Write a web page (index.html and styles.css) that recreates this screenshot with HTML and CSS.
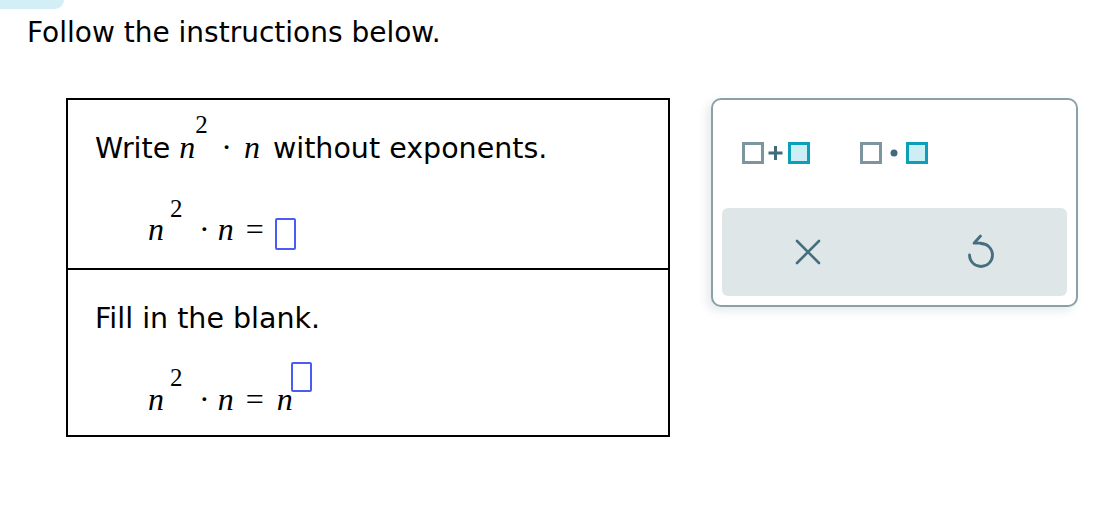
FILE: index.html
```html
<!DOCTYPE html>
<html lang="en">
<head>
<meta charset="utf-8">
<title>Follow the instructions below.</title>
<link rel="stylesheet" href="styles.css">
</head>
<body>
<div class="tab"></div>
<h1 class="title">Follow the instructions below.</h1>
<div class="main">
  <div class="problem">
    <div class="cell cell-a">
      <p class="prompt">Write <span class="math"><span class="mi">n</span><span class="sup s1">2</span><span class="mo dot1">·</span><span class="mi last">n</span></span>without exponents.</p>
      <div class="eq eq-a"><span class="mi first">n</span><span class="sup s2">2</span><span class="mo dot2">·</span><span class="mi n2">n</span><span class="mo equals">=</span><span class="blank blank-a"></span></div>
    </div>
    <div class="cell cell-b">
      <p class="prompt">Fill in the blank.</p>
      <div class="eq eq-b"><span class="mi first">n</span><span class="sup s2">2</span><span class="mo dot2">·</span><span class="mi n2">n</span><span class="mo equals">=</span><span class="mi n3">n</span><span class="blank blank-b"></span></div>
    </div>
  </div>
  <div class="panel">
    <div class="tools">
      <button class="tool" type="button" aria-label="sum">
        <svg width="68" height="22" viewBox="0 0 68 22">
          <rect x="1.5" y="1.5" width="19" height="19" fill="#fff" stroke="#7c959f" stroke-width="3"/>
          <path d="M26.5 11h14M33.5 4v14" stroke="#44697a" stroke-width="3" fill="none"/>
          <rect x="47.5" y="1.5" width="19" height="19" fill="#cdeef4" stroke="#0b9fb8" stroke-width="3"/>
        </svg>
      </button>
      <button class="tool" type="button" aria-label="product">
        <svg width="68" height="22" viewBox="0 0 68 22">
          <rect x="1.5" y="1.5" width="19" height="19" fill="#fff" stroke="#7c959f" stroke-width="3"/>
          <circle cx="34" cy="11" r="3.5" fill="#44697a"/>
          <rect x="47.5" y="1.5" width="19" height="19" fill="#cdeef4" stroke="#0b9fb8" stroke-width="3"/>
        </svg>
      </button>
    </div>
    <div class="actions">
      <button class="action" type="button" aria-label="clear">
        <svg width="26" height="26" viewBox="0 0 26 26">
          <path d="M2 2L24 24M24 2L2 24" stroke="#456f7e" stroke-width="2.6" stroke-linecap="round" fill="none"/>
        </svg>
      </button>
      <button class="action" type="button" aria-label="reset">
        <svg width="28" height="36" viewBox="0 0 28 36">
          <path d="M14 9.5A11.5 11.5 0 1 1 2.5 21" stroke="#456f7e" stroke-width="2.8" stroke-linecap="round" fill="none"/>
          <path d="M13.5 2L7 9.2H14" stroke="#456f7e" stroke-width="2.8" stroke-linecap="round" stroke-linejoin="round" fill="none"/>
        </svg>
      </button>
    </div>
  </div>
</div>
</body>
</html>
```
FILE: styles.css
```css
html, body {
  margin: 0;
  padding: 0;
  background: #fff;
}
body {
  font-family: "DejaVu Sans", Verdana, sans-serif;
  color: #000;
}
.tab {
  width: 64px;
  height: 9px;
  background: #d3eff5;
  border-bottom-right-radius: 9px;
}
.title {
  margin: 8.3px 0 0 0;
  padding-left: 27px;
  font-size: 28px;
  font-weight: normal;
  line-height: 32px;
}
.main {
  display: flex;
  align-items: flex-start;
  margin-top: 48.7px;
  padding-left: 66px;
}
.problem {
  width: 604px;
  box-sizing: border-box;
  border: 2px solid #000;
}
.cell {
  box-sizing: border-box;
  padding-left: 27px;
}
.cell-a {
  height: 170px;
  border-bottom: 2px solid #000;
  padding-top: 24.55px;
}
.cell-b {
  height: 165px;
  padding-top: 31.65px;
}
.prompt {
  margin: 0;
  font-size: 28.5px;
  line-height: 33px;
  white-space: nowrap;
}
.math {
  line-height: 0;
}
.mi, .mo {
  font-family: "Liberation Serif", "Times New Roman", serif;
  font-size: 32px;
  line-height: 0;
}
.mi {
  font-style: italic;
}
.sup {
  font-family: "Liberation Serif", "Times New Roman", serif;
  font-size: 25px;
  line-height: 0;
}
.s1 { margin-left: 0; vertical-align: 25px; }
.dot1 { margin-left: 13.5px; }
.math .last { margin-left: 12px; margin-right: 13px; }

.eq {
  font-family: "Liberation Serif", "Times New Roman", serif;
  font-size: 32px;
  line-height: 44px;
  padding-left: 53px;
  white-space: nowrap;
}
.eq-a { margin-top: 42.55px; }
.eq-b { margin-top: 27.35px; }
.s2 { margin-left: 6px; vertical-align: 23.5px; }
.dot2 { margin-left: 16.5px; }
.n2 { margin-left: 8px; }
.equals { margin-left: 12px; }
.n3 { margin-left: 13px; }
.blank {
  display: inline-block;
  box-sizing: border-box;
  width: 21px;
  border: 2px solid #4a5cf5;
  border-radius: 2px;
  background: #fff;
}
.blank-a {
  height: 32px;
  margin-left: 11px;
  vertical-align: -10px;
}
.blank-b {
  height: 30px;
  margin-left: -2px;
  vertical-align: 18px;
}

.panel {
  margin-left: 41px;
  width: 367px;
  height: 209px;
  box-sizing: border-box;
  border: 2px solid #8ba1aa;
  border-radius: 10px;
  background: #fff;
  box-shadow: -4px 4px 10px rgba(60, 80, 90, 0.12);
  padding: 9px;
  display: grid;
  grid-template-rows: 89px 88px;
  row-gap: 10px;
}
.tools {
  display: grid;
  grid-template-columns: 108px 108px;
  column-gap: 10px;
}
.tool, .action {
  border: 0;
  background: transparent;
  padding: 0;
  margin: 0;
  display: flex;
  align-items: center;
  justify-content: center;
}
.tool svg, .action svg {
  display: block;
}
.actions {
  display: grid;
  grid-template-columns: 1fr 1fr;
  background: #dfe6e8;
  border-radius: 6px;
}
```
